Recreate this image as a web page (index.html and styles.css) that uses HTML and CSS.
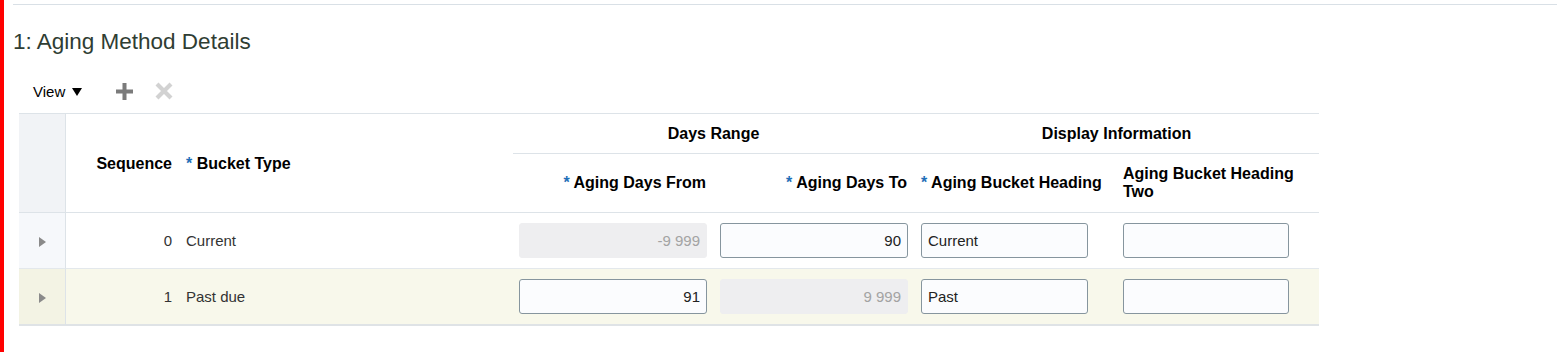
FILE: index.html
```html
<!DOCTYPE html>
<html lang="en">
<head>
<meta charset="utf-8">
<title>Aging Method Details</title>
<link rel="stylesheet" href="styles.css">
</head>
<body>
<div class="page">
  <div class="rule"></div>
  <h1 class="title">1: Aging Method Details</h1>
  <div class="toolbar">
    <span class="view">View <span class="caret"></span></span>
    <svg class="icon add" width="17" height="17" viewBox="0 0 17 17" aria-hidden="true"><path d="M6.5 0h4v6.5H17v4h-6.5V17h-4v-6.5H0v-4h6.5z" fill="#7b7b7b"/></svg>
    <svg class="icon del" width="18" height="18" viewBox="0 0 18 18" aria-hidden="true"><path d="M2 2L16 16M16 2L2 16" stroke="#d2d2d2" stroke-width="4.2" stroke-linecap="butt"/></svg>
  </div>
  <table class="grid">
    <colgroup>
      <col class="c-rh"><col class="c-seq"><col class="c-type"><col class="c-from"><col class="c-to"><col class="c-head"><col class="c-two">
    </colgroup>
    <thead>
      <tr class="hg">
        <th class="rh" rowspan="2"></th>
        <th class="seq" rowspan="2">Sequence</th>
        <th class="type" rowspan="2"><span class="req">*</span> Bucket Type</th>
        <th class="group" colspan="2">Days Range</th>
        <th class="group" colspan="2">Display Information</th>
      </tr>
      <tr class="hs">
        <th class="right"><span class="req">*</span> Aging Days From</th>
        <th class="right"><span class="req">*</span> Aging Days To</th>
        <th class="left"><span class="req">*</span> Aging Bucket Heading</th>
        <th class="left two">Aging Bucket Heading Two</th>
      </tr>
    </thead>
    <tbody>
      <tr class="row">
        <td class="rh"><span class="disclose"></span></td>
        <td class="seq">0</td>
        <td class="type">Current</td>
        <td class="from"><div class="field num ro">-9 999</div></td>
        <td class="to"><div class="field num">90</div></td>
        <td class="head"><div class="field txt">Current</div></td>
        <td class="two"><div class="field txt2"></div></td>
      </tr>
      <tr class="row alt">
        <td class="rh"><span class="disclose"></span></td>
        <td class="seq">1</td>
        <td class="type">Past due</td>
        <td class="from"><div class="field num">91</div></td>
        <td class="to"><div class="field num ro">9 999</div></td>
        <td class="head"><div class="field txt">Past</div></td>
        <td class="two"><div class="field txt2"></div></td>
      </tr>
    </tbody>
  </table>
</div>
</body>
</html>
```

FILE: styles.css
```css
html, body {
  margin: 0;
  padding: 0;
  background: #ffffff;
}

.page {
  border-left: 4px solid #ff0000;
  min-height: 352px;
  box-sizing: border-box;
  padding-top: 4px;
  font-family: "Liberation Sans", Arial, sans-serif;
  color: #333333;
}

.rule {
  margin-left: 9px;
  border-top: 1px solid #d9e0e6;
}

.title {
  margin: 23px 0 0 9px;
  font-size: 22.5px;
  font-weight: normal;
  line-height: 28px;
  color: #2f3d33;
}

.toolbar {
  display: flex;
  align-items: center;
  height: 24px;
  margin: 23px 0 10px 29px;
}

.view {
  display: inline-flex;
  align-items: center;
  font-size: 15px;
  color: #000000;
}

.caret {
  display: inline-block;
  width: 0;
  height: 0;
  margin-left: 7px;
  margin-top: 2px;
  border-left: 5.5px solid transparent;
  border-right: 5.5px solid transparent;
  border-top: 8px solid #000000;
}

.icon.add {
  margin-left: 34px;
}

.icon.del {
  margin-left: 22px;
}

.grid {
  margin-left: 15px;
  width: 1300px;
  table-layout: fixed;
  border-collapse: separate;
  border-spacing: 0;
  border-top: 1px solid #dde3e8;
}

.c-rh { width: 47px; }
.c-seq { width: 113px; }
.c-type { width: 334px; }
.c-from { width: 200px; }
.c-to { width: 201px; }
.c-head { width: 201px; }
.c-two { width: 204px; }

.grid th {
  font-size: 16px;
  font-weight: bold;
  color: #000000;
  padding: 0 7px;
  vertical-align: middle;
  line-height: 18px;
}

.grid th.rh {
  background: #f1f3f6;
  border-right: 1px solid #dde3e8;
  border-bottom: 1px solid #dde3e8;
  padding: 0;
}

.grid th.seq {
  text-align: right;
  border-bottom: 1px solid #dde3e8;
  padding-top: 2px;
}

.grid th.type {
  text-align: left;
  border-bottom: 1px solid #dde3e8;
  padding-top: 2px;
}

.grid th.group {
  text-align: center;
  border-bottom: 1px solid #dde3e8;
}

.hg { height: 40px; }
.hs { height: 59px; }

.grid .hs th {
  border-bottom: 1px solid #dde3e8;
}

.grid th.right { text-align: right; }
.grid th.left { text-align: left; }
.grid th.two { padding-left: 8px; }

.req {
  color: #1f6fb8;
  font-weight: bold;
}

.row { height: 56px; }
.row.alt { height: 57px; }

.row td {
  font-size: 15px;
  color: #333333;
  padding: 0 7px;
  vertical-align: middle;
  border-bottom: 1px solid #e3e8ec;
}

.row.alt td {
  background: #f8f8eb;
  border-bottom: 2px solid #dfe3e6;
}

.row td.rh {
  background: #f6f8fb;
  border-right: 1px solid #dde3e8;
  padding: 0;
  text-align: center;
}

.row.alt td.rh {
  background: #f3f3e4;
}

.disclose {
  display: inline-block;
  width: 0;
  height: 0;
  margin-left: 1px;
  border-top: 5px solid transparent;
  border-bottom: 5px solid transparent;
  border-left: 7px solid #8a8a8a;
  vertical-align: middle;
}

.row td.seq { text-align: right; }
.row td.type { text-align: left; }
.row td.from { padding-left: 6px; }
.row td.two { padding-left: 8px; }

.field {
  box-sizing: border-box;
  height: 35px;
  border: 1px solid #86959e;
  border-radius: 3px;
  background: #fbfcfe;
  font-size: 15px;
  line-height: 33px;
  color: #222222;
  padding: 0 6px;
  white-space: nowrap;
}

.field.num {
  width: 188px;
  text-align: right;
}

.field.txt {
  width: 167px;
  text-align: left;
}

.field.txt2 {
  width: 166px;
}

.field.ro {
  border-color: #eeeef0;
  background: #eeeef0;
  color: #a3a3a3;
}
```
